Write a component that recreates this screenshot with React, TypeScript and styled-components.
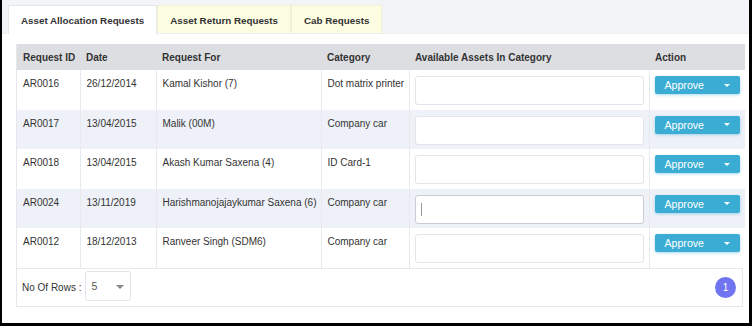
import React from 'react';
import styled, { createGlobalStyle } from 'styled-components';

const GlobalStyle = createGlobalStyle`
  html, body {
    margin: 0;
    padding: 0;
    background: #000;
  }
  body {
    font-family: "Liberation Sans", Arial, sans-serif;
    font-size: 10px;
    color: #333;
  }
`;

const Frame = styled.div`
  width: 752px;
  height: 326px;
  box-sizing: border-box;
  border-left: 2px solid #000;
  border-right: 3px solid #000;
  border-bottom: 3px solid #000;
  background: #fff;
  overflow: hidden;
`;

const TabBar = styled.div`
  display: flex;
  align-items: flex-end;
  height: 34px;
  padding-left: 6px;
  background: #f3f4f8;
  border-bottom: 1px solid #eceef2;
  box-sizing: border-box;
`;

const Tab = styled.div<{ $active?: boolean }>`
  display: flex;
  align-items: center;
  padding: 1px 12px 0;
  font-weight: bold;
  font-size: 9.8px;
  color: #333;
  background: ${p => (p.$active ? '#fff' : '#fdfde2')};
  border: 1px solid ${p => (p.$active ? '#e6e7eb' : '#f1f1d6')};
  border-bottom: none;
  box-sizing: border-box;
  margin-bottom: ${p => (p.$active ? '-1px' : '0')};
  height: ${p => (p.$active ? '29px' : '28px')};
`;

const Panel = styled.div`
  padding: 10px 6px 0 14px;
`;

const Card = styled.div`
  border: 1px solid #e6e7eb;
  border-top: none;
`;

const Table = styled.table`
  width: 100%;
  border-collapse: collapse;
  table-layout: fixed;
`;

const Th = styled.th<{ $w: number }>`
  width: ${p => p.$w - 12}px;
  height: 26px;
  background: #dddee2;
  text-align: left;
  font-weight: bold;
  padding: 0 6px;
  font-size: 10px;
  color: #333;
  white-space: nowrap;
`;

const Tr = styled.tr<{ $striped?: boolean }>`
  height: 39.6px;
  background: ${p => (p.$striped ? '#eef1f8' : '#fff')};
`;

const Td = styled.td`
  vertical-align: top;
  padding: 8px 6px 0;
  border-left: 1px solid #e8e9ed;
  line-height: 12px;
  white-space: nowrap;
  overflow: hidden;
  &:first-child {
    border-left: none;
  }
`;

const InputCell = styled.td`
  vertical-align: top;
  padding: 6px 5px 0;
  border-left: 1px solid #e8e9ed;
`;

const AssetInput = styled.div<{ $focused?: boolean }>`
  height: 29px;
  box-sizing: border-box;
  background: #fff;
  border: 1px solid ${p => (p.$focused ? '#c9ccd4' : '#e3e5ea')};
  border-radius: 3px;
  display: flex;
  align-items: center;
  padding-left: 5px;
`;

const Caret = styled.span`
  width: 1px;
  height: 13px;
  background: #999;
`;

const ButtonCell = styled.td`
  vertical-align: top;
  padding: 6px 0 0;
  border-left: 1px solid #e8e9ed;
`;

const ApproveButton = styled.div`
  margin-left: 5px;
  width: 85px;
  height: 18px;
  box-sizing: border-box;
  background: #3badd4;
  border-radius: 2px;
  box-shadow: 0 1px 3px rgba(59, 173, 212, 0.45);
  color: #fff;
  font-size: 10.6px;
  display: flex;
  align-items: center;
  justify-content: space-between;
  padding: 0 10px;
`;

const DownCaret = styled.span`
  width: 0;
  height: 0;
  border-left: 3px solid transparent;
  border-right: 3px solid transparent;
  border-top: 3px solid #fff;
`;

const Footer = styled.div`
  display: flex;
  align-items: center;
  justify-content: space-between;
  height: 38px;
  border-top: 1px solid #e8e9ed;
  padding: 0 5px;
  box-sizing: border-box;
`;

const RowsPicker = styled.div`
  display: flex;
  align-items: center;
  gap: 3px;
`;

const SelectBox = styled.div`
  width: 46px;
  height: 30px;
  box-sizing: border-box;
  border: 1px solid #e3e5ea;
  border-radius: 3px;
  display: flex;
  align-items: center;
  justify-content: space-between;
  padding: 0 6px 0 5px;
  color: #555;
  font-size: 10.5px;
  margin-top: -2px;
  margin-left: 1px;
`;

const GreyCaret = styled.span`
  width: 0;
  height: 0;
  border-left: 4px solid transparent;
  border-right: 4px solid transparent;
  border-top: 4px solid #888;
  margin-top: 2px;
`;

const PageDot = styled.div`
  width: 21px;
  height: 21px;
  margin-right: 1px;
  border-radius: 50%;
  background: #7074f0;
  color: #fff;
  font-size: 10px;
  display: flex;
  align-items: center;
  justify-content: center;
`;

const rows = [
  { id: 'AR0016', date: '26/12/2014', who: 'Kamal Kishor (7)', cat: 'Dot matrix printer' },
  { id: 'AR0017', date: '13/04/2015', who: 'Malik (00M)', cat: 'Company car' },
  { id: 'AR0018', date: '13/04/2015', who: 'Akash Kumar Saxena (4)', cat: 'ID Card-1' },
  { id: 'AR0024', date: '13/11/2019', who: 'Harishmanojajaykumar Saxena (6)', cat: 'Company car', focused: true },
  { id: 'AR0012', date: '18/12/2013', who: 'Ranveer Singh (SDM6)', cat: 'Company car' },
];

const App = () => {
  return (
    <Frame>
      <GlobalStyle />
      <TabBar>
        <Tab $active>Asset Allocation Requests</Tab>
        <Tab>Asset Return Requests</Tab>
        <Tab>Cab Requests</Tab>
      </TabBar>
      <Panel>
        <Card>
          <Table>
            <thead>
              <tr>
                <Th $w={63}>Request ID</Th>
                <Th $w={76}>Date</Th>
                <Th $w={165}>Request For</Th>
                <Th $w={88}>Category</Th>
                <Th $w={240}>Available Assets In Category</Th>
                <Th $w={96}>Action</Th>
              </tr>
            </thead>
            <tbody>
              {rows.map((r, i) => (
                <Tr key={r.id} $striped={i % 2 === 1}>
                  <Td>{r.id}</Td>
                  <Td>{r.date}</Td>
                  <Td>{r.who}</Td>
                  <Td>{r.cat}</Td>
                  <InputCell>
                    <AssetInput $focused={r.focused}>{r.focused && <Caret />}</AssetInput>
                  </InputCell>
                  <ButtonCell>
                    <ApproveButton>
                      Approve
                      <DownCaret />
                    </ApproveButton>
                  </ButtonCell>
                </Tr>
              ))}
            </tbody>
          </Table>
          <Footer>
            <RowsPicker>
              No Of Rows :
              <SelectBox>
                5
                <GreyCaret />
              </SelectBox>
            </RowsPicker>
            <PageDot>1</PageDot>
          </Footer>
        </Card>
      </Panel>
    </Frame>
  );
};

export default App;
